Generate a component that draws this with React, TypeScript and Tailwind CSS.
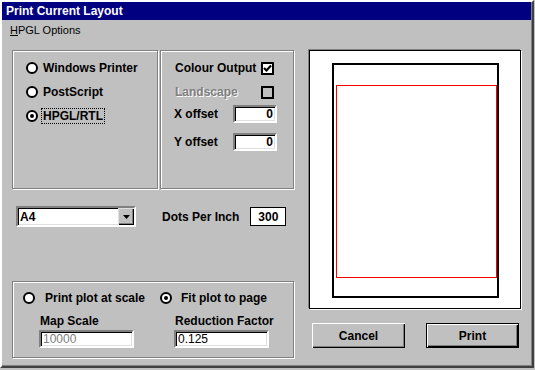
import React from "react";

const sunken =
  "border-2 border-t-[#808080] border-l-[#808080] border-b-white border-r-white shadow-[inset_1px_1px_0_#000,inset_-1px_-1px_0_#dfdfdf]";
const etched =
  "border border-[#808080] shadow-[inset_1px_1px_0_#fff,1px_1px_0_#fff]";

function Radio({ checked }: { checked?: boolean }) {
  return (
    <span className="w-[12px] h-[12px] rounded-full bg-white border-2 border-black flex items-center justify-center shrink-0">
      {checked && <span className="w-[4px] h-[4px] rounded-full bg-black" />}
    </span>
  );
}

function Check({ checked, disabled }: { checked?: boolean; disabled?: boolean }) {
  return (
    <span
      className={`w-[13px] h-[13px] border-2 border-black flex items-center justify-center shrink-0 ${
        disabled ? "bg-[#c0c0c0]" : "bg-white"
      }`}
    >
      {checked && (
        <svg width="9" height="9" viewBox="0 0 9 9">
          <path d="M1 4 L3.5 6.5 L8 1.5" stroke="#000" strokeWidth="2.2" fill="none" />
        </svg>
      )}
    </span>
  );
}

function Field({ value, className, align = "right", muted }: { value: string; className: string; align?: "left" | "right"; muted?: boolean }) {
  return (
    <div
      className={`${sunken} bg-white flex items-center px-[2px] ${align === "right" ? "justify-end" : "justify-start"} ${className} ${
        muted ? "text-[#808080] font-normal" : "text-black"
      }`}
    >
      {value}
    </div>
  );
}

function Button({ label, isDefault }: { label: string; isDefault?: boolean }) {
  return (
    <button
      className={`w-[93px] h-[25px] bg-[#c0c0c0] flex items-center justify-center font-bold text-[12px] ${
        isDefault
          ? "border border-black shadow-[inset_1px_1px_0_#fff,inset_-1px_-1px_0_#000,inset_-2px_-2px_0_#808080]"
          : "shadow-[inset_1px_1px_0_#fff,inset_-1px_-1px_0_#000,inset_-2px_-2px_0_#808080]"
      }`}
    >
      {label}
    </button>
  );
}

export default function App() {
  return (
    <div className="w-[535px] h-[370px] bg-[#c0c0c0] font-['Liberation_Sans',Arial,sans-serif] text-[12px] text-black overflow-hidden">
      <div className="w-[534px] h-[368px] border-2 border-t-white border-l-white border-r-[#404040] border-b-[#404040] shadow-[inset_-1px_-1px_0_#808080]">
        {/* title bar */}
        <div className="h-[18px] bg-[#000080] text-white font-bold text-[12px] flex items-center pl-[4px] mr-[1px]">
          Print Current Layout
        </div>

        {/* menu */}
        <div className="h-[20px] flex items-center pl-[8px] text-[11px]">
          <span>
            <span className="underline">H</span>PGL Options
          </span>
        </div>

        {/* body */}
        <div className="flex pt-[10px] pl-[10px]">
          {/* left column */}
          <div className="w-[282px] flex flex-col">
            <div className="flex gap-[2px] h-[139px]">
              {/* output type */}
              <div className={`${etched} w-[146px] h-full pt-[5px] pl-[13px] font-bold`}>
                <div className="h-[24px] flex items-center gap-[5px]">
                  <Radio />
                  <span>Windows Printer</span>
                </div>
                <div className="h-[24px] flex items-center gap-[5px]">
                  <Radio />
                  <span>PostScript</span>
                </div>
                <div className="h-[24px] flex items-center gap-[4px]">
                  <Radio checked />
                  <span className="outline-1 outline-dotted outline-black px-[1px] leading-[14px]">HPGL/RTL</span>
                </div>
              </div>

              {/* options */}
              <div className={`${etched} w-[134px] h-full pt-[5px] pl-[13px] font-bold`}>
                <div className="h-[24px] flex items-center">
                  <span className="w-[87px] pl-[1px]">Colour Output</span>
                  <Check checked />
                </div>
                <div className="h-[24px] flex items-center">
                  <span className="w-[87px] pl-[1px] text-[#808080] [text-shadow:1px_1px_0_#fff]">Landscape</span>
                  <Check disabled />
                </div>
                <div className="h-[18px] mt-[1px] flex items-center">
                  <span className="w-[59px]">X offset</span>
                  <Field value="0" className="w-[44px] h-[18px]" />
                </div>
                <div className="h-[18px] mt-[10px] flex items-center">
                  <span className="w-[59px]">Y offset</span>
                  <Field value="0" className="w-[44px] h-[18px]" />
                </div>
              </div>
            </div>

            {/* paper size row */}
            <div className="flex items-center mt-[17px] h-[21px] font-bold">
              <div className={`${sunken} bg-white ml-[4px] w-[120px] h-[21px] flex items-center justify-between`}>
                <span className="pl-[2px]">A4</span>
                <span className="w-[16px] h-[17px] bg-[#c0c0c0] shadow-[inset_1px_1px_0_#dfdfdf,inset_-1px_-1px_0_#000,inset_-2px_-2px_0_#808080] flex items-center justify-center">
                  <svg width="7" height="4" viewBox="0 0 7 4">
                    <path d="M0 0 H7 L3.5 4 Z" fill="#000" />
                  </svg>
                </span>
              </div>
              <span className="ml-[26px]">Dots Per Inch</span>
              <div className="ml-[11px] w-[36px] h-[19px] border border-black bg-white flex items-center justify-center">
                300
              </div>
            </div>

            {/* scale group */}
            <div className={`${etched} mt-[54px] h-[77px] font-bold pt-[9px]`}>
              <div className="flex items-center h-[14px]">
                <span className="ml-[10px]">
                  <Radio />
                </span>
                <span className="ml-[10px]">Print plot at scale</span>
                <span className="ml-[15px]">
                  <Radio checked />
                </span>
                <span className="ml-[9px]">Fit plot to page</span>
              </div>
              <div className="flex mt-[10px]">
                <div className="ml-[26px] flex flex-col">
                  <span className="h-[13px] leading-[13px] pl-[1px]">Map Scale</span>
                  <Field value="10000" align="left" muted className="w-[95px] h-[18px] mt-[2px]" />
                </div>
                <div className="ml-[40px] flex flex-col">
                  <span className="h-[13px] leading-[13px] pl-[1px] whitespace-nowrap">Reduction Factor</span>
                  <Field value="0.125" align="left" className="w-[95px] h-[18px] mt-[2px] font-normal" />
                </div>
              </div>
            </div>
          </div>

          {/* right column */}
          <div className="ml-[15px] w-[212px] flex flex-col">
            <div className="h-[259px] bg-white border border-black shadow-[-1px_-1px_0_#808080,1px_1px_0_#fff]">
              {/* page preview drawing */}
              <svg width="210" height="257" viewBox="0 0 210 257" shapeRendering="crispEdges">
                <rect x="23" y="13" width="165" height="233" fill="none" stroke="#000" strokeWidth="2" />
                <rect x="26.5" y="34.5" width="160" height="192" fill="none" stroke="#ff0000" strokeWidth="1" />
              </svg>
            </div>
            <div className="flex mt-[14px] ml-[3px] gap-[21px]">
              <Button label="Cancel" />
              <Button label="Print" isDefault />
            </div>
          </div>
        </div>
      </div>
    </div>
  );
}
